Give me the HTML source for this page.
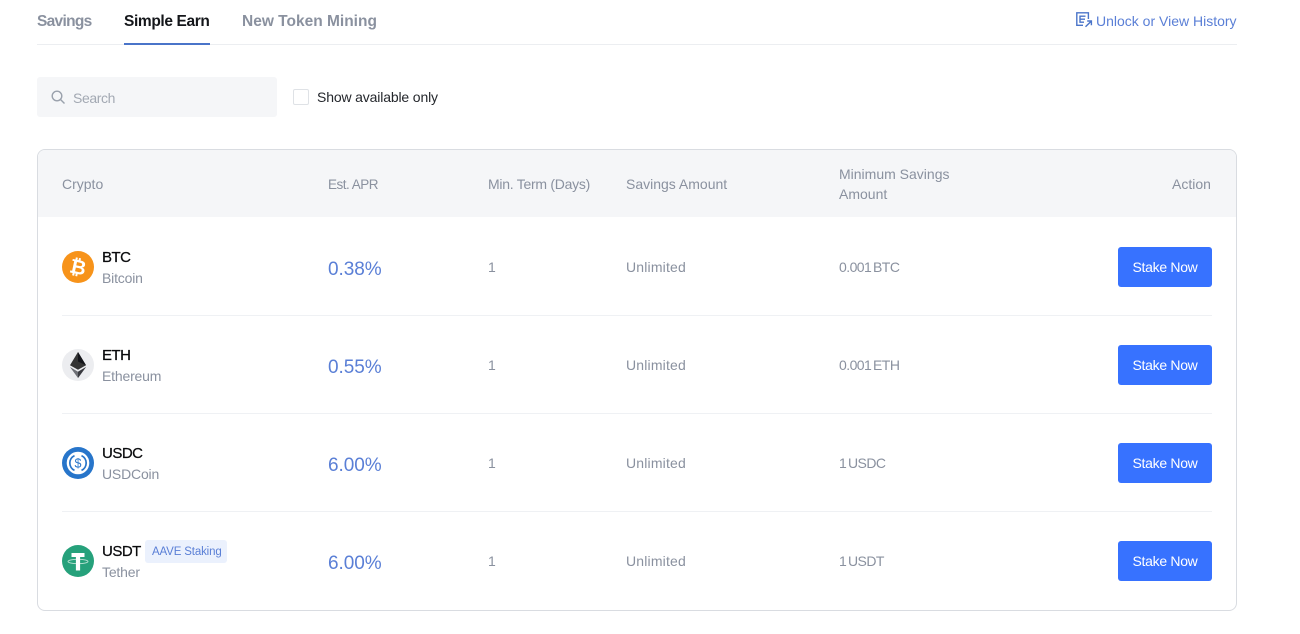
<!DOCTYPE html>
<html><head><meta charset="utf-8"><style>
html,body{margin:0;padding:0;background:#fff;width:1300px;height:634px;overflow:hidden}
body{font-family:"Liberation Sans","Noto Sans CJK SC",sans-serif;position:relative;color:#8a919f}
.t{position:absolute;white-space:nowrap;line-height:20px;font-size:14px}
.b{position:absolute}
.sym{color:#0a0b0d;font-size:15px;line-height:20px;left:102px;letter-spacing:-.5px;-webkit-text-stroke:.25px #0a0b0d}
.name{color:#8a919f;font-size:14px;left:102px;letter-spacing:-.18px}
.apr{color:#5a7fd6;font-size:19px;left:328px;line-height:24px;letter-spacing:-.05px}
.btn{position:absolute;left:1118px;width:94px;height:40px;background:#3772ff;border-radius:3px;color:#fff;font-size:14px;line-height:40px;text-align:center;letter-spacing:-.3px}
.sep{position:absolute;left:62px;width:1150px;height:1px;background:#eff1f4}
.min{letter-spacing:-.55px;word-spacing:-1.6px}
.unl{left:626px;letter-spacing:.18px}
.tab{font-size:15.5px;font-weight:700;top:12px}
svg{position:absolute;display:block}
</style></head><body>
<div class="t tab" style="left:37px;color:#8a919f;letter-spacing:-.7px">Savings</div>
<div class="t tab" style="left:124px;color:#14161a;letter-spacing:-.37px">Simple Earn</div>
<div class="t tab" style="left:242px;color:#8a919f;letter-spacing:0">New Token Mining</div>
<div class="b" style="left:37px;top:44px;width:1200px;height:1px;background:#eceef1"></div>
<div class="b" style="left:124px;top:43px;width:86px;height:2px;background:#4a74c9"></div>
<svg style="left:1076px;top:12px" width="17" height="16" viewBox="0 0 17 16" fill="none" stroke="#4a74c9" stroke-width="1.4"><path d="M7 13.3H.8V.8h11.6V7"/><path d="M9.5 4.2H4v6h4M4 7.2h5"/><path d="M9.5 14.8L15.2 9.2M11.2 9h4.2v4.2"/></svg>
<div class="t" style="left:1096px;top:11px;color:#5a7fd6">Unlock or View History</div>

<div class="b" style="left:37px;top:77px;width:240px;height:40px;background:#f5f6f8;border-radius:3px"></div>
<svg style="left:51px;top:90px" width="15" height="15" viewBox="0 0 15 15" fill="none" stroke="#9aa1ac" stroke-width="1.4"><circle cx="6" cy="6" r="4.8"/><path d="M9.5 9.5l4 4"/></svg>
<div class="t" style="left:73px;top:88px;color:#a3a9b3;letter-spacing:-.4px">Search</div>
<div class="b" style="left:293px;top:89px;width:14px;height:14px;border:1px solid #dfe2e6;border-radius:2px"></div>
<div class="t" style="left:317px;top:87px;color:#24272c;letter-spacing:-.15px">Show available only</div>

<div class="b" style="left:37px;top:149px;width:1198px;height:460px;border:1px solid #d9dce1;border-radius:8px;overflow:hidden"><div style="height:67px;background:#f5f6f8"></div></div>
<div class="t" style="left:62px;top:174px">Crypto</div>
<div class="t" style="left:328px;top:175px;font-size:13.5px;letter-spacing:-.5px">Est. APR</div>
<div class="t" style="left:488px;top:174px;letter-spacing:-.27px">Min. Term (Days)</div>
<div class="t" style="left:626px;top:174px">Savings Amount</div>
<div class="t" style="left:839px;top:164px">Minimum Savings</div>
<div class="t" style="left:839px;top:184px">Amount</div>
<div class="t" style="left:1172px;top:174px">Action</div>

<svg style="left:62px;top:251px" width="32" height="32" viewBox="0 0 32 32"><circle cx="16" cy="16" r="16" fill="#f7931a"/><text x="16" y="23" transform="rotate(12 16 16)" text-anchor="middle" font-family="Liberation Sans" font-weight="700" font-size="20" fill="#fff">₿</text></svg>
<div class="t sym" style="top:248px">BTC</div>
<div class="t name" style="top:268px">Bitcoin</div>
<div class="t apr" style="top:258px">0.38%</div>
<div class="t" style="left:488px;top:257px">1</div>
<div class="t unl" style="top:257px">Unlimited</div>
<div class="t min" style="left:839px;top:257px">0.001 BTC</div>
<div class="btn" style="top:247px">Stake Now</div>
<div class="sep" style="top:315px"></div>

<svg style="left:62px;top:349px" width="32" height="32" viewBox="0 0 32 32"><circle cx="16" cy="16" r="16" fill="#ecedf0"/><path d="M16 3L8 16.2 16 20.8l8-4.6z" fill="#343434"/><path d="M16 3v9.5l8 3.7z" fill="#14151a"/><path d="M8 18L16 29l8-11-8 4.7z" fill="#6e7076"/><path d="M16 22.7V29l8-11z" fill="#3a3b41"/></svg>
<div class="t sym" style="top:346px">ETH</div>
<div class="t name" style="top:366px">Ethereum</div>
<div class="t apr" style="top:356px">0.55%</div>
<div class="t" style="left:488px;top:355px">1</div>
<div class="t unl" style="top:355px">Unlimited</div>
<div class="t min" style="left:839px;top:355px">0.001 ETH</div>
<div class="btn" style="top:345px">Stake Now</div>
<div class="sep" style="top:413px"></div>

<svg style="left:62px;top:447px" width="32" height="32" viewBox="0 0 32 32"><circle cx="16" cy="16" r="16" fill="#2775ca"/><circle cx="16" cy="16" r="11.3" fill="#fff"/><path d="M12.5 8.6a8.2 8.2 0 0 0 0 14.8M19.5 8.6a8.2 8.2 0 0 1 0 14.8" fill="none" stroke="#2775ca" stroke-width="1.7"/><text x="16" y="20.5" text-anchor="middle" font-family="Liberation Sans" font-weight="400" font-size="12.5" fill="#2775ca">$</text></svg>
<div class="t sym" style="top:444px">USDC</div>
<div class="t name" style="top:464px">USDCoin</div>
<div class="t apr" style="top:454px">6.00%</div>
<div class="t" style="left:488px;top:453px">1</div>
<div class="t unl" style="top:453px">Unlimited</div>
<div class="t min" style="left:839px;top:453px">1 USDC</div>
<div class="btn" style="top:443px">Stake Now</div>
<div class="sep" style="top:511px"></div>

<svg style="left:62px;top:545px" width="32" height="32" viewBox="0 0 32 32"><circle cx="16" cy="16" r="16" fill="#26a17b"/><ellipse cx="16" cy="16.5" rx="10" ry="2.2" fill="none" stroke="#bfe3d7" stroke-width=".9"/><path d="M9.5 8h13v4h-4.4v13.5h-4.2V12H9.5z" fill="#fff"/></svg>
<div class="t sym" style="top:542px">USDT</div>
<div class="b" style="left:145px;top:540px;width:82px;height:23px;background:#ebf1fd;border-radius:3px"></div>
<div class="t" style="left:152px;top:542px;font-size:11.5px;color:#5a7fd6;letter-spacing:-.15px">AAVE Staking</div>
<div class="t name" style="top:562px">Tether</div>
<div class="t apr" style="top:552px">6.00%</div>
<div class="t" style="left:488px;top:551px">1</div>
<div class="t unl" style="top:551px">Unlimited</div>
<div class="t min" style="left:839px;top:551px">1 USDT</div>
<div class="btn" style="top:541px">Stake Now</div>
</body></html>
